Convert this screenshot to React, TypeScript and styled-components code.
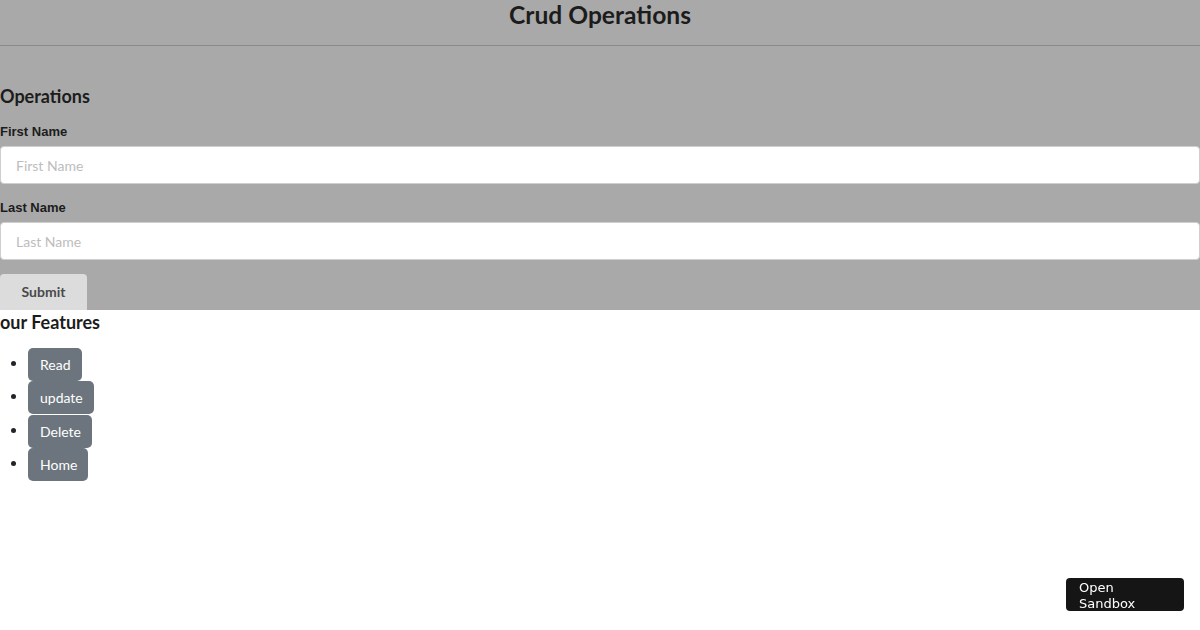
import React from "react";
import styled, { createGlobalStyle } from "styled-components";

const Global = createGlobalStyle`
  html, body { margin: 0; padding: 0; background: #fff; }
  body { font-family: "Lato", "Liberation Sans", sans-serif; color: #212529; }
  * { box-sizing: border-box; }
`;

const Top = styled.section`
  background: #a9a9a9;
`;

const Header = styled.header`
  height: 46px;
  border-bottom: 1px solid #8a8a8a;
`;

const Title = styled.h1`
  margin: 0;
  font-family: "Lato", sans-serif;
  font-weight: 700;
  font-size: 24.6px;
  line-height: 29px;
  text-align: center;
  color: #1c1c1c;
`;

const Form = styled.form`
  display: flex;
  flex-direction: column;
  padding-top: 39px;
`;

const SectionTitle = styled.h3`
  margin: 0;
  font-family: "Lato", sans-serif;
  font-weight: 700;
  font-size: 18px;
  line-height: 22px;
  color: #1c1c1c;
`;

const Label = styled.label<{ $top: number }>`
  display: block;
  margin-top: ${(p) => p.$top}px;
  font-family: "Liberation Sans", Arial, sans-serif;
  font-weight: 700;
  font-size: 13px;
  line-height: 15px;
  color: #1c1c1c;
`;

const Input = styled.input`
  display: block;
  width: 100%;
  height: 38px;
  margin-top: 7px;
  padding: 0 15px;
  border: 1px solid #cfcfcf;
  border-radius: 4px;
  background: #fff;
  font-family: "Lato", sans-serif;
  font-size: 14px;
  outline: none;
  &::placeholder { color: #bdbdbd; }
`;

const Submit = styled.button`
  align-self: flex-start;
  margin-top: 14px;
  width: 87px;
  height: 36px;
  border: none;
  border-radius: 4px 4px 0 0;
  background: #dcdcdc;
  color: #4a4a4a;
  font-family: "Lato", sans-serif;
  font-weight: 700;
  font-size: 14px;
  line-height: 35px;
  padding: 0 0 1px;
`;

const Features = styled.h3`
  margin: 1px 0 0;
  font-family: "Lato", sans-serif;
  font-weight: 700;
  font-size: 18px;
  line-height: 22px;
  color: #1c1c1c;
`;

const List = styled.ul`
  margin: 15px 0 0;
  padding-left: 28px;
`;

const Item = styled.li`
  height: 33.3px;
  font-family: "Lato", sans-serif;
  font-size: 16px;
  line-height: 27px;
`;

const NavButton = styled.button`
  display: inline-block;
  vertical-align: top;
  height: 33px;
  padding: 0 11px 0 12px;
  border: none;
  border-radius: 5px;
  background: #6c757d;
  color: #fff;
  font-family: "Lato", sans-serif;
  font-size: 14px;
  line-height: 33px;
`;

const Sandbox = styled.button`
  position: fixed;
  right: 16px;
  bottom: 19px;
  width: 118px;
  height: 33px;
  padding: 2px 30px 0 13px;
  border: none;
  border-radius: 4px;
  background: #151515;
  color: #fff;
  text-align: left;
  font-family: "DejaVu Sans", sans-serif;
  font-size: 13px;
  line-height: 16px;
`;

const features = ["Read", "update", "Delete", "Home"];

export default function App() {
  return (
    <>
      <Global />
      <Top>
        <Header>
          <Title>Crud Operations</Title>
        </Header>
        <Form onSubmit={(e) => e.preventDefault()}>
          <SectionTitle>Operations</SectionTitle>
          <Label $top={17}>First Name</Label>
          <Input placeholder="First Name" />
          <Label $top={16}>Last Name</Label>
          <Input placeholder="Last Name" />
          <Submit type="submit">Submit</Submit>
        </Form>
      </Top>
      <Features>our Features</Features>
      <List>
        {features.map((f) => (
          <Item key={f}>
            <NavButton>{f}</NavButton>
          </Item>
        ))}
      </List>
      <Sandbox>Open Sandbox</Sandbox>
    </>
  );
}
